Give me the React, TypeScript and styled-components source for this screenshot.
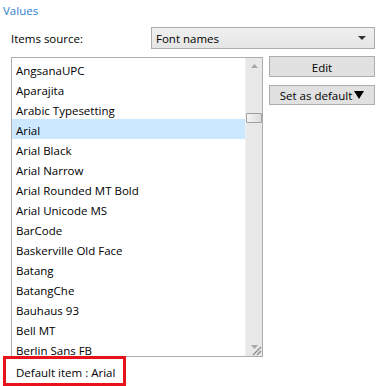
import React from "react";
import styled, { createGlobalStyle } from "styled-components";

const Global = createGlobalStyle`
  html, body { margin: 0; padding: 0; background: #ffffff; }
  body { font-family: "Open Sans", "Noto Sans", sans-serif; font-size: 11.5px; color: #000; }
  * { box-sizing: border-box; }
`;

const Page = styled.div`
  width: 383px;
  height: 386px;
  overflow: hidden;
  display: flex;
  flex-direction: column;
`;

const Header = styled.div`
  color: #2f7fd0;
  padding: 3px 0 0 3px;
  height: 29px;
  line-height: 16px;
`;

const SourceRow = styled.div`
  display: flex;
  align-items: center;
  padding-left: 11px;
  height: 22px;
`;

const Label = styled.div`
  width: 140px;
  padding-top: 2px;
`;

const Combo = styled.div`
  width: 224px;
  height: 22px;
  border: 1px solid #acacac;
  background: linear-gradient(#f0f0f0, #e5e5e5);
  display: flex;
  align-items: center;
  justify-content: space-between;
  padding: 0 8px 0 4px;
`;

const ComboText = styled.span`
  padding-top: 2px;
`;

const SmallArrow = styled.span`
  width: 0;
  height: 0;
  border-left: 4px solid transparent;
  border-right: 4px solid transparent;
  border-top: 4px solid #333;
`;

const Main = styled.div`
  display: flex;
  gap: 6px;
  padding-left: 11px;
  margin-top: 8px;
`;

const ListBox = styled.div`
  width: 252px;
  height: 300px;
  border: 1px solid #abadb3;
  display: flex;
  overflow: hidden;
`;

const Items = styled.div`
  flex: 1;
  padding-top: 1px;
`;

const Item = styled.div<{ $selected?: boolean }>`
  height: 20px;
  line-height: 21px;
  padding: 1px 0 0 4px;
  white-space: nowrap;
  background: ${(p) => (p.$selected ? "#cce8ff" : "transparent")};
`;

const Scrollbar = styled.div`
  width: 17px;
  background: #e8e8e8;
  border-left: 1px solid #f0f0f0;
  position: relative;
  display: flex;
  flex-direction: column;
  align-items: center;
`;

const ArrowBox = styled.div`
  height: 17px;
  width: 100%;
  display: flex;
  align-items: center;
  justify-content: center;
`;

const Thumb = styled.div`
  position: absolute;
  left: 0;
  top: 55px;
  width: 16px;
  height: 10px;
  border: 1px solid #a0a0a0;
  background: linear-gradient(90deg, #f4f4f4, #dcdcdc);
  border-radius: 1px;
`;

const Spacer = styled.div`
  flex: 1;
`;

const Grip = styled.svg`
  position: absolute;
  right: 0;
  bottom: 0;
`;

const Buttons = styled.div`
  display: flex;
  flex-direction: column;
  gap: 8px;
  margin-top: -1px;
`;

const Button = styled.div<{ $h: number }>`
  width: 106px;
  height: ${(p) => p.$h}px;
  border: 1px solid #adadad;
  background: #e1e1e1;
  display: flex;
  align-items: center;
  justify-content: center;
  gap: 2px;
`;

const ButtonText = styled.span`
  padding-top: 2px;
`;

const BigArrow = styled.span`
  width: 0;
  height: 0;
  border-left: 5px solid transparent;
  border-right: 5px solid transparent;
  border-top: 8px solid #000;
`;

const Footer = styled.div`
  margin: -1px 0 0 3px;
  width: 123px;
  height: 32px;
  border: 3px solid #e8131a;
  padding: 6px 0 0 10px;
  line-height: 16px;
`;

const fonts = [
  "AngsanaUPC",
  "Aparajita",
  "Arabic Typesetting",
  "Arial",
  "Arial Black",
  "Arial Narrow",
  "Arial Rounded MT Bold",
  "Arial Unicode MS",
  "BarCode",
  "Baskerville Old Face",
  "Batang",
  "BatangChe",
  "Bauhaus 93",
  "Bell MT",
  "Berlin Sans FB",
];

export default function App() {
  return (
    <Page>
      <Global />
      <Header>Values</Header>
      <SourceRow>
        <Label>Items source:</Label>
        <Combo>
          <ComboText>Font names</ComboText>
          <SmallArrow />
        </Combo>
      </SourceRow>
      <Main>
        <ListBox>
          <Items>
            {fonts.map((f) => (
              <Item key={f} $selected={f === "Arial"}>
                {f}
              </Item>
            ))}
          </Items>
          <Scrollbar>
            <ArrowBox>
              <svg width="7" height="4" viewBox="0 0 7 4">
                <path d="M0 4 L3.5 0 L7 4 Z" fill="#a8a8a8" />
              </svg>
            </ArrowBox>
            <Spacer />
            <ArrowBox>
              <svg width="7" height="4" viewBox="0 0 7 4">
                <path d="M0 0 L3.5 4 L7 0 Z" fill="#a8a8a8" />
              </svg>
            </ArrowBox>
            <Thumb />
            <Grip width="12" height="12" viewBox="0 0 12 12">
              <path d="M11 3 L3 11 M11 7 L7 11" stroke="#8a8a8a" strokeWidth="1.2" />
            </Grip>
          </Scrollbar>
        </ListBox>
        <Buttons>
          <Button $h={21}>
            <ButtonText>Edit</ButtonText>
          </Button>
          <Button $h={20}>
            <ButtonText>Set as default</ButtonText> <BigArrow />
          </Button>
        </Buttons>
      </Main>
      <Footer>Default item : Arial</Footer>
    </Page>
  );
}
